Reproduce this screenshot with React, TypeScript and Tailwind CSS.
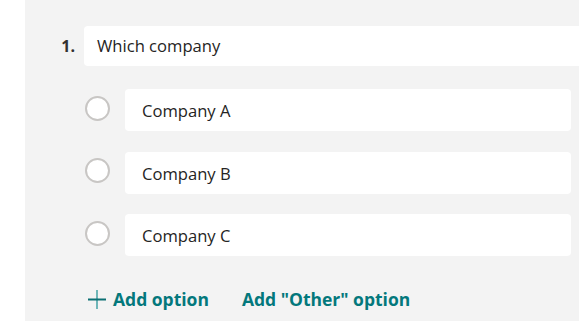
import React from "react";

const font = { fontFamily: '"Open Sans", "Noto Sans", sans-serif' };

function Radio() {
  return <div className="w-[25px] h-[25px] rounded-full border-2 border-[#c8c6c4] bg-white shrink-0 -mt-[4px]" />;
}

function Option({ label }: { label: string }) {
  return (
    <div className="flex items-center">
      <Radio />
      <div className="ml-[15px] flex-1 h-[42px] bg-white rounded-[4px] flex items-center pl-[17px] pt-[3px] text-[16.6px] text-[#252423]">
        {label}
      </div>
    </div>
  );
}

export default function App() {
  return (
    <div className="w-[579px] h-[321px] flex bg-white overflow-hidden" style={font}>
      <div className="w-[25px] shrink-0 bg-white" />
      <div className="flex-1 bg-[#f3f3f3] pt-[26px]">
        <div className="flex items-center">
          <div className="w-[50px] text-right text-[16px] font-bold text-[#323130]">1.</div>
          <div className="ml-[9px] flex-1 mr-[-10px] h-[40px] bg-white rounded-l-[4px] flex items-center pl-[13px] pt-[1px] text-[16.6px] text-[#252423]">
            Which company
          </div>
        </div>
        <div className="ml-[60px] mr-[8px] mt-[23px] flex flex-col gap-[20.5px]">
          <Option label="Company A" />
          <Option label="Company B" />
          <Option label="Company C" />
        </div>
        <div className="ml-[63px] mt-[30px] flex items-center text-[#03787c] font-bold text-[17.5px]">
          <svg width="18" height="19" viewBox="0 0 18 19" className="shrink-0">
            <line x1="9" y1="0" x2="9" y2="19" stroke="#6fb6b8" strokeWidth="2" />
            <line x1="0" y1="9.5" x2="18" y2="9.5" stroke="#0b6f73" strokeWidth="2" />
          </svg>
          <span className="ml-[7px]">Add option</span>
          <span className="ml-[33px]">Add "Other" option</span>
        </div>
      </div>
    </div>
  );
}
